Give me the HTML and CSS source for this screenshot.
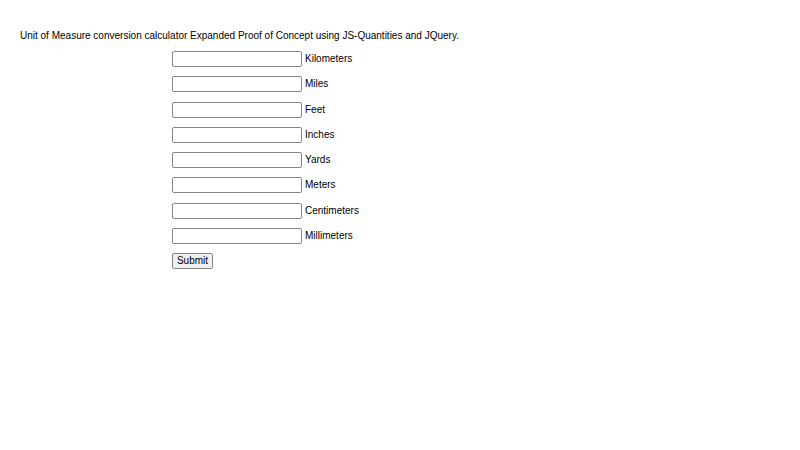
FILE: index.html
```html
<!DOCTYPE html>
<html>

<head>
    <title>Unit of Measure conversion calculator</title>
    <meta charset="UTF-8">
    <link rel="stylesheet" href="styles.css">
</head>

<body>
    <p class="intro">Unit of Measure conversion calculator Expanded Proof of Concept using JS-Quantities and JQuery.</p>
    <form class="units">
        <div class="row"><input type="text" id="km"> <label for="km">Kilometers</label></div>
        <div class="row"><input type="text" id="mi"> <label for="mi">Miles</label></div>
        <div class="row"><input type="text" id="ft"> <label for="ft">Feet</label></div>
        <div class="row"><input type="text" id="in"> <label for="in">Inches</label></div>
        <div class="row"><input type="text" id="yd"> <label for="yd">Yards</label></div>
        <div class="row"><input type="text" id="m"> <label for="m">Meters</label></div>
        <div class="row"><input type="text" id="cm"> <label for="cm">Centimeters</label></div>
        <div class="row"><input type="text" id="mm"> <label for="mm">Millimeters</label></div>
        <div class="row"><button type="button">Submit</button></div>
    </form>
</body>

</html>
```

FILE: styles.css
```css
body {
    /* Plain Arial look. */
    font-family: "Liberation Sans", Arial, sans-serif;
    font-size: 10px;
    color: #000;
    background: #fff;
    margin: 0;
    padding: 30px 20px 0 20px;
}

.intro {
    margin: 0 0 9px 0;
    line-height: 12px;
}

.units {
    display: flex;
    flex-direction: column;
    gap: 9.25px;
    margin-left: 152px;
}

.row {
    display: flex;
    align-items: center;
    gap: 3px;
    height: 16px;
}

.row label {
    padding-bottom: 1px;
}

.row input {
    box-sizing: border-box;
    width: 130px;
    height: 16px;
    margin: 0;
    padding: 0 2px;
    border: 1px solid #858585;
    border-radius: 2px;
    font: inherit;
}

.row button {
    box-sizing: border-box;
    width: 41px;
    height: 16px;
    margin: 0;
    padding: 0;
    font: inherit;
    line-height: 12px;
    color: #000;
    background: #efefef;
    border: 1px solid #858585;
    border-radius: 2px;
}
```
